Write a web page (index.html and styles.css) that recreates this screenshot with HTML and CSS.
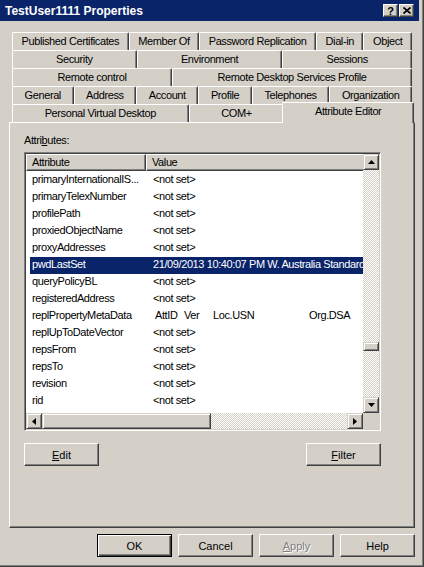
FILE: index.html
```html
<!DOCTYPE html>
<html lang="en">
<head>
  <meta charset="UTF-8" />
  <title>TestUser1111 Properties</title>
  <link rel="stylesheet" href="styles.css">
</head>
<body>
  <div class="window">
    <div class="titlebar">
      <span class="title">TestUser1111 Properties</span>
      <div class="caption-btns">
        <span class="cap-btn">?</span>
        <span class="cap-btn">
          <svg width="8" height="7" viewBox="0 0 8 7"><path d="M0.5 0.5L7.5 6.5M7.5 0.5L0.5 6.5" stroke="#000" stroke-width="1.7"/></svg>
        </span>
      </div>
    </div>

    <!-- tab strip, top row first -->
    <div class="tabs">
      <div class="tab-row">
        <div class="tab">Published Certificates</div>
        <div class="tab">Member Of</div>
        <div class="tab">Password Replication</div>
        <div class="tab">Dial-in</div>
        <div class="tab">Object</div>
      </div>
      <div class="tab-row">
        <div class="tab">Security</div>
        <div class="tab">Environment</div>
        <div class="tab">Sessions</div>
      </div>
      <div class="tab-row">
        <div class="tab">Remote control</div>
        <div class="tab">Remote Desktop Services Profile</div>
      </div>
      <div class="tab-row">
        <div class="tab">General</div>
        <div class="tab">Address</div>
        <div class="tab">Account</div>
        <div class="tab">Profile</div>
        <div class="tab">Telephones</div>
        <div class="tab">Organization</div>
      </div>
      <div class="tab-row">
        <div class="tab">Personal Virtual Desktop</div>
        <div class="tab">COM+</div>
        <div class="tab active">Attribute Editor</div>
      </div>
    </div>

    <div class="panel">
      <div class="label">Attri<u>b</u>utes:</div>

      <div class="listbox">
        <div class="view">
          <div class="list-header">
            <div class="col-h col-name">Attribute</div>
            <div class="col-h col-value">Value</div>
          </div>
          <div class="rows">
            <div class="row"><span class="c-name">primaryInternationalIS...</span><span class="c-value">&lt;not set&gt;</span></div>
            <div class="row"><span class="c-name">primaryTelexNumber</span><span class="c-value">&lt;not set&gt;</span></div>
            <div class="row"><span class="c-name">profilePath</span><span class="c-value">&lt;not set&gt;</span></div>
            <div class="row"><span class="c-name">proxiedObjectName</span><span class="c-value">&lt;not set&gt;</span></div>
            <div class="row"><span class="c-name">proxyAddresses</span><span class="c-value">&lt;not set&gt;</span></div>
            <div class="row sel"><span class="c-name">pwdLastSet</span><span class="c-value">21/09/2013 10:40:07 PM W. Australia Standard Time</span></div>
            <div class="row"><span class="c-name">queryPolicyBL</span><span class="c-value">&lt;not set&gt;</span></div>
            <div class="row"><span class="c-name">registeredAddress</span><span class="c-value">&lt;not set&gt;</span></div>
            <div class="row"><span class="c-name">replPropertyMetaData</span><span class="c-value meta"><span class="m-id">AttID</span><span class="m-ver">Ver</span><span class="m-usn">Loc.USN</span><span>Org.DSA</span></span></div>
            <div class="row"><span class="c-name">replUpToDateVector</span><span class="c-value">&lt;not set&gt;</span></div>
            <div class="row"><span class="c-name">repsFrom</span><span class="c-value">&lt;not set&gt;</span></div>
            <div class="row"><span class="c-name">repsTo</span><span class="c-value">&lt;not set&gt;</span></div>
            <div class="row"><span class="c-name">revision</span><span class="c-value">&lt;not set&gt;</span></div>
            <div class="row"><span class="c-name">rid</span><span class="c-value">&lt;not set&gt;</span></div>
            <div class="row"><span class="c-name">roomNumber</span><span class="c-value">&lt;not set&gt;</span></div>
          </div>
        </div>

        <div class="vscroll">
          <div class="sb-btn"><svg width="7" height="4" viewBox="0 0 7 4"><polygon points="0,4 3.5,0 7,4" fill="#000"/></svg></div>
          <div class="track v-track"><div class="sb-btn v-thumb"></div></div>
          <div class="sb-btn"><svg width="7" height="4" viewBox="0 0 7 4"><polygon points="0,0 3.5,4 7,0" fill="#000"/></svg></div>
        </div>
        <div class="hscroll">
          <div class="sb-btn"><svg width="4" height="7" viewBox="0 0 4 7"><polygon points="4,0 0,3.5 4,7" fill="#000"/></svg></div>
          <div class="track h-track"><div class="sb-btn h-thumb"></div></div>
          <div class="sb-btn"><svg width="4" height="7" viewBox="0 0 4 7"><polygon points="0,0 4,3.5 0,7" fill="#000"/></svg></div>
        </div>
        <div class="corner"></div>
      </div>

      <div class="panel-btns">
        <button class="btn"><u>E</u>dit</button>
        <button class="btn"><u>F</u>ilter</button>
      </div>
    </div>

    <div class="dlg-btns">
      <button class="btn default">OK</button>
      <button class="btn">Cancel</button>
      <button class="btn disabled"><u>A</u>pply</button>
      <button class="btn">Help</button>
    </div>
  </div>
</body>
</html>
```

FILE: styles.css
```css
:root {
  --face: #d4d0c8;
  --shadow: #808080;
  --dark: #404040;
  --hi: #ffffff;
  --navy: #0a246a;
}

body {
  margin: 0;
  font-family: "Liberation Sans", Arial, sans-serif;
  font-size: 11px;
  letter-spacing: -0.4px;
  color: #000;
}

.window {
  width: 424px;
  height: 567px;
  box-sizing: border-box;
  background: var(--face);
  border-right: 1px solid var(--dark);
  border-bottom: 1px solid var(--dark);
  box-shadow: inset -1px -1px var(--shadow);
  padding-right: 2px;
}

/* Title bar */
.titlebar {
  height: 21px;
  margin-right: 2px;
  padding: 0 5px;
  display: flex;
  align-items: center;
  background: var(--navy);
  color: #fff;
}

.title {
  font-size: 12px;
  font-weight: bold;
  letter-spacing: 0;
}

.caption-btns {
  margin-left: auto;
  display: flex;
  gap: 1px;
}

.cap-btn {
  width: 15px;
  height: 13px;
  box-sizing: border-box;
  display: flex;
  align-items: center;
  justify-content: center;
  background: var(--face);
  color: #000;
  font-weight: bold;
  font-size: 11px;
  border: 1px solid;
  border-color: var(--hi) var(--dark) var(--dark) var(--hi);
  box-shadow: inset -1px -1px var(--shadow);
}

/* Tabs */
.tabs {
  margin: 11px 0 0 12px;
  width: 400px;
}

.tab-row {
  display: flex;
  height: 18px;
}

.tab {
  flex: 1 1 auto;
  padding: 0 4px;
  text-align: center;
  line-height: 17px;
  white-space: nowrap;
  border-top: 1px solid var(--hi);
  border-left: 1px solid var(--hi);
  border-right: 1px solid var(--dark);
  border-radius: 2px 2px 0 0;
  box-shadow: inset -1px 0 var(--shadow);
  background: var(--face);
}

.tab.active {
  margin: -2px -2px -1px -2px;
  position: relative;
  z-index: 1;
}

/* Page */
.panel {
  margin-left: 9px;
  width: 406px;
  height: 406px;
  box-sizing: border-box;
  padding: 11px 0 0 14px;
  border: 1px solid;
  border-color: var(--hi) var(--dark) var(--dark) var(--hi);
  box-shadow: inset -1px -1px var(--shadow);
}

.label {
  line-height: 13px;
}

.listbox {
  margin-top: 5px;
  width: 357px;
  height: 279px;
  box-sizing: border-box;
  padding: 1px;
  border: 1px solid;
  border-color: var(--shadow) var(--hi) var(--hi) var(--shadow);
  box-shadow: inset 1px 1px var(--dark), inset -1px -1px var(--face);
  background: #fff;
  display: grid;
  grid-template-columns: 1fr 16px;
  grid-template-rows: 1fr 16px;
}

.view {
  overflow: hidden;
  background: #fff;
}

.list-header {
  display: flex;
  width: 560px;
}

.col-h {
  height: 17px;
  box-sizing: border-box;
  padding-left: 5px;
  line-height: 15px;
  background: var(--face);
  border: 1px solid;
  border-color: var(--hi) var(--dark) var(--dark) var(--hi);
  box-shadow: inset -1px -1px var(--shadow);
}

.col-name {
  width: 120px;
}

.col-value {
  flex: 1;
}

.rows {
  padding-top: 1px;
  width: 560px;
}

.row {
  display: flex;
  height: 17px;
  line-height: 15px;
  margin-left: 4px;
  white-space: nowrap;
}

.row.sel {
  background: var(--navy);
  color: #fff;
}

.c-name {
  width: 116px;
  box-sizing: border-box;
  padding-left: 2px;
  overflow: hidden;
  flex-shrink: 0;
}

.c-value {
  padding-left: 7px;
}

.meta {
  padding-left: 9px;
}

.meta span {
  display: inline-block;
}

.m-id { width: 29px; }
.m-ver { width: 29px; }
.m-usn { width: 96px; }

/* Scroll bars */
.sb-btn {
  width: 16px;
  height: 16px;
  box-sizing: border-box;
  display: flex;
  align-items: center;
  justify-content: center;
  background: var(--face);
  border: 1px solid;
  border-color: var(--face) var(--dark) var(--dark) var(--face);
  box-shadow: inset 1px 1px var(--hi), inset -1px -1px var(--shadow);
}

.track {
  background: repeating-conic-gradient(var(--hi) 0 25%, var(--face) 0 50%) 0 0 / 2px 2px;
}

.vscroll {
  display: flex;
  flex-direction: column;
}

.v-track {
  flex: 1;
}

.v-thumb {
  margin-top: 172px;
  height: 9px;
}

.hscroll {
  display: flex;
}

.h-track {
  flex: 1;
}

.h-thumb {
  width: 169px;
}

.corner {
  background: var(--face);
}

/* Buttons */
.btn {
  width: 75px;
  height: 23px;
  padding: 0;
  font: inherit;
  color: #000;
  background: var(--face);
  border: 1px solid;
  border-color: var(--hi) var(--dark) var(--dark) var(--hi);
  box-shadow: inset -1px -1px var(--shadow);
}

.btn.default {
  border-color: #000;
  box-shadow: inset 1px 1px var(--hi), inset -1px -1px var(--dark), inset -2px -2px var(--shadow);
}

.btn.disabled {
  color: var(--shadow);
  text-shadow: 1px 1px var(--hi);
}

.panel-btns {
  width: 357px;
  margin-top: 12px;
  display: flex;
  justify-content: space-between;
}

.dlg-btns {
  margin-top: 6px;
  padding-right: 6px;
  display: flex;
  justify-content: flex-end;
  gap: 6px;
}
```
